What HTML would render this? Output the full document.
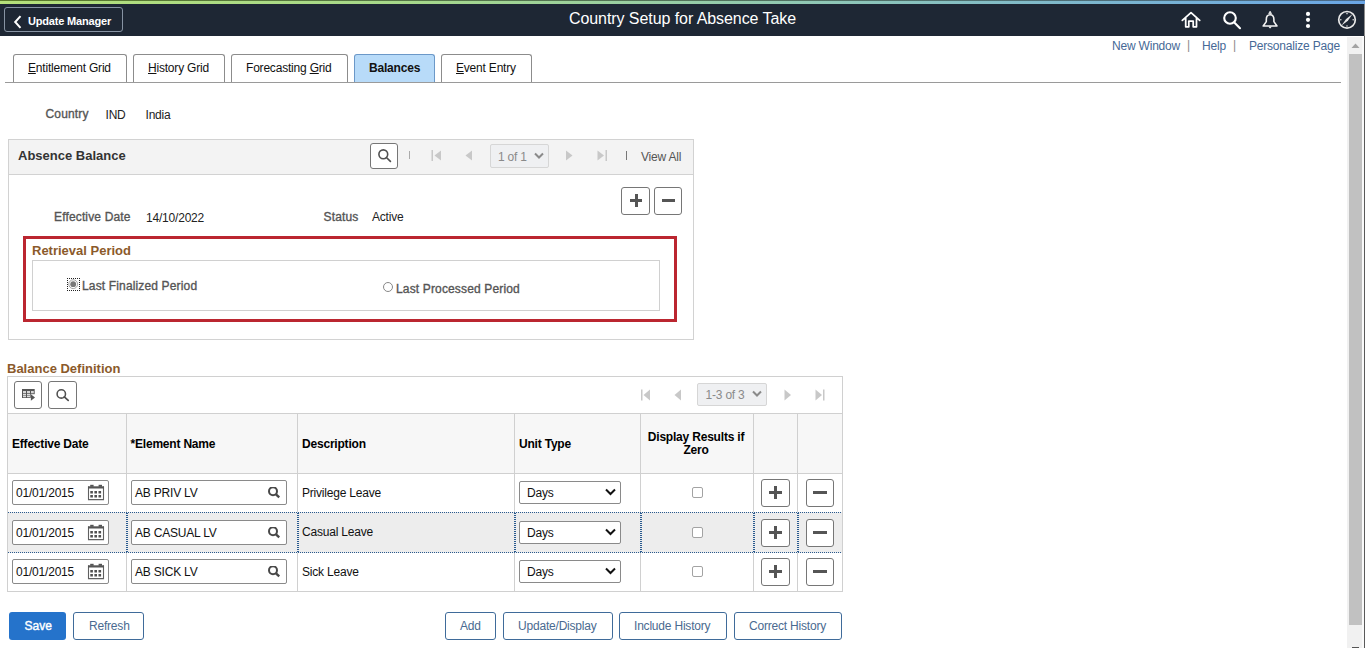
<!DOCTYPE html>
<html><head><meta charset="utf-8">
<style>
*{box-sizing:border-box;margin:0;padding:0}
html,body{width:1365px;height:648px;overflow:hidden;background:#fff;font-family:"Liberation Sans",sans-serif;color:#333}
.a{position:absolute}
.t{position:absolute;white-space:nowrap;font-size:12px;line-height:14px;letter-spacing:-0.2px}
.b{font-weight:bold}
.sb{font-weight:normal;letter-spacing:0.15px;-webkit-text-stroke:0.35px currentColor}
#strip{position:absolute;left:0;top:0;width:1365px;height:4px;background:linear-gradient(90deg,#b5e07a 0%,#a6d88a 30%,#8fc7b5 60%,#6aa6e6 100%)}
#strip:before{content:"";position:absolute;left:0;top:0;width:100%;height:1px;background:linear-gradient(90deg,#5b7a2a,#4a6a8a)}
#hdr{position:absolute;left:0;top:4px;width:1365px;height:32px;background:#1e2734}
#back{position:absolute;left:4px;top:7px;width:119px;height:25px;border:1px solid #8793a3;border-radius:3px}
.tab{position:absolute;top:54px;height:29px;border:1px solid #8c8c8c;border-bottom:none;border-radius:3px 3px 0 0;background:#fff}
.tab.sel{background:#b8dbf9;border-color:#6b98c8}
.lnk{color:#466996}
.sep{color:#8a8a8a}
.box{position:absolute;border:1px solid #d2d2d2}
.ibtn{position:absolute;border:1px solid #767676;border-radius:3px;background:#fff}
.inp{position:absolute;border:1px solid #8a8a8a;border-radius:2px;background:#fff}
.bbtn{position:absolute;top:612px;height:28px;border:1px solid #3f6b9a;border-radius:3px;background:#fff}
.vl{position:absolute;width:1px;background:#d0d0d0}
.hl{position:absolute;height:1px;background:#d0d0d0}
</style></head><body>
<div id="strip"></div>
<div id="hdr"></div>
<div id="back"></div>
<svg class="a" style="left:13px;top:15px" width="9" height="14" viewBox="0 0 9 14"><path d="M7.5 1.2 L2.2 7 L7.5 12.8" stroke="#fff" stroke-width="2" fill="none"/></svg>
<div class="t b" style="left:28px;top:15px;font-size:11px;color:#fff;line-height:13px;letter-spacing:-0.18px">Update Manager</div>
<div class="t" style="left:0;width:1365px;text-align:center;top:9.5px;font-size:16px;line-height:18px;letter-spacing:-0.07px;color:#fff">Country Setup for Absence Take</div>

<!-- header icons -->
<svg class="a" style="left:1180px;top:10px" width="22" height="20" viewBox="0 0 22 20"><path d="M2.3 10.4 L11 2.6 L19.7 10.4 M5.7 8.2 V16.8 H8.8 V11.1 H13.2 V16.8 H16.5 V8.2" stroke="#fff" stroke-width="1.75" fill="none" stroke-linejoin="round" stroke-linecap="round"/></svg>
<svg class="a" style="left:1220px;top:8px" width="24" height="24" viewBox="0 0 24 24"><circle cx="10" cy="10" r="5.8" stroke="#fff" stroke-width="2.1" fill="none"/><path d="M14.3 14.5 L20 20.2" stroke="#fff" stroke-width="2.1" stroke-linecap="round"/></svg>
<svg class="a" style="left:1260px;top:9px" width="20" height="22" viewBox="0 0 20 22"><path d="M10.1 5.7 C7.4 5.7 6.3 7.7 6.3 10.6 L6.3 12.6 L3.2 17 L17 17 L13.9 12.6 L13.9 10.6 C13.9 7.7 12.8 5.7 10.1 5.7 Z" stroke="#f2f2f2" stroke-width="1.6" fill="none" stroke-linejoin="round"/><path d="M8.7 4.6 L10.1 2.2 L11.5 4.6 Z" fill="#f2f2f2" stroke="#f2f2f2" stroke-width="0.8" stroke-linejoin="round"/><path d="M8.4 17.6 Q10.1 21.2 11.8 17.6 Z" fill="#f2f2f2"/></svg>
<svg class="a" style="left:1300px;top:8px" width="16" height="24" viewBox="0 0 16 24"><circle cx="8" cy="5.9" r="2.1" fill="#fff"/><circle cx="8" cy="11.8" r="2.1" fill="#fff"/><circle cx="8" cy="18" r="2.1" fill="#fff"/></svg>
<svg class="a" style="left:1336px;top:9px" width="22" height="22" viewBox="0 0 22 22"><circle cx="11" cy="10.8" r="8.3" stroke="#e8e8e8" stroke-width="1.7" fill="none"/><path d="M5.5 16.5 L11.9 11.7 L16.5 5 L10.1 9.9 Z" fill="#e8e8e8"/><circle cx="11" cy="4.6" r="0.8" fill="#ddd"/><circle cx="11" cy="17" r="0.8" fill="#ddd"/><circle cx="4.8" cy="10.8" r="0.8" fill="#ddd"/><circle cx="17.2" cy="10.8" r="0.8" fill="#ddd"/></svg>
<div class="a" style="left:1364px;top:4px;width:1px;height:32px;background:#8c8c8c"></div>

<!-- links -->
<div class="t lnk" style="left:1112px;top:39px">New Window</div>
<div class="t sep" style="left:1187px;top:38px">|</div>
<div class="t lnk" style="left:1202px;top:39px">Help</div>
<div class="t sep" style="left:1233px;top:38px">|</div>
<div class="t lnk" style="left:1249px;top:39px">Personalize Page</div>

<!-- tabs -->
<div class="tab" style="left:13px;width:114px"></div>
<div class="tab" style="left:133px;width:92px"></div>
<div class="tab" style="left:231px;width:117px"></div>
<div class="tab sel" style="left:354px;width:81px"></div>
<div class="tab" style="left:441px;width:91px"></div>
<div class="a" style="left:5px;top:82px;width:1336px;height:1px;background:#9a9a9a"></div>
<div class="t" style="left:28px;top:61px;color:#111"><u>E</u>ntitlement Grid</div>
<div class="t" style="left:148px;top:61px;color:#111"><u>H</u>istory Grid</div>
<div class="t" style="left:246px;top:61px;color:#111">Forecasting <u>G</u>rid</div>
<div class="t b" style="left:369px;top:61px;color:#111">Balances</div>
<div class="t" style="left:456px;top:61px;color:#111"><u>E</u>vent Entry</div>

<!-- country -->
<div class="t sb" style="left:45.5px;top:107px;color:#555">Country</div>
<div class="t" style="left:105.5px;top:108px;color:#222">IND</div>
<div class="t" style="left:145.5px;top:108px;color:#222">India</div>

<!-- absence balance box -->
<div class="box" style="left:8px;top:139px;width:686px;height:201px"></div>
<div class="a" style="left:9px;top:140px;width:684px;height:35px;background:#f3f3f3;border-bottom:1px solid #d2d2d2"></div>
<div class="t b" style="left:18px;top:148px;font-size:13px;line-height:16px;letter-spacing:0;color:#333">Absence Balance</div>
<div class="ibtn" style="left:370px;top:143px;width:28px;height:26px"></div>
<svg class="a" style="left:376px;top:148px" width="16" height="16" viewBox="0 0 16 16"><circle cx="7.3" cy="6.3" r="4.4" stroke="#505050" stroke-width="1.6" fill="none"/><path d="M10.4 9.5 L14.4 13.3" stroke="#505050" stroke-width="1.7" stroke-linecap="round"/></svg>
<div class="a" style="left:409px;top:151px;width:1px;height:8px;background:#aaa"></div>
<svg class="a" style="left:431px;top:150px" width="11" height="11" viewBox="0 0 11 11"><rect x="0.5" y="0" width="1.5" height="11" fill="#c8c8c8"/><path d="M10 0.5 V10.5 L3.5 5.5 Z" fill="#c8c8c8"/></svg>
<svg class="a" style="left:465px;top:150px" width="8" height="11" viewBox="0 0 8 11"><path d="M7 0.5 V10.5 L0.5 5.5 Z" fill="#c8c8c8"/></svg>
<div class="a" style="left:490px;top:144px;width:59px;height:24px;background:#eff0f2;border:1px solid #d6d6d6;border-radius:2px"></div>
<div class="t" style="left:498px;top:150px;color:#8a8a8a">1 of 1</div>
<svg class="a" style="left:534px;top:152px" width="10" height="8" viewBox="0 0 10 8"><path d="M1 1.5 L5 5.5 L9 1.5" stroke="#8a8a8a" stroke-width="2" fill="none"/></svg>
<svg class="a" style="left:565px;top:150px" width="8" height="11" viewBox="0 0 8 11"><path d="M1 0.5 V10.5 L7.5 5.5 Z" fill="#c8c8c8"/></svg>
<svg class="a" style="left:597px;top:150px" width="11" height="11" viewBox="0 0 11 11"><path d="M0.5 0.5 V10.5 L7 5.5 Z" fill="#c8c8c8"/><rect x="8.5" y="0" width="1.5" height="11" fill="#c8c8c8"/></svg>
<div class="a" style="left:626px;top:151px;width:1px;height:9px;background:#777"></div>
<div class="t" style="left:641px;top:150px;color:#555">View All</div>

<div class="ibtn" style="left:621px;top:187px;width:29px;height:28px"></div>
<div class="a" style="left:630px;top:199px;width:12px;height:3px;background:#555"></div>
<div class="a" style="left:634.5px;top:194px;width:3px;height:13px;background:#555"></div>
<div class="ibtn" style="left:654px;top:187px;width:28px;height:28px"></div>
<div class="a" style="left:662px;top:199px;width:13px;height:3px;background:#555"></div>

<div class="t sb" style="left:54px;top:210px;color:#555">Effective Date</div>
<div class="t" style="left:146px;top:210.5px;color:#222">14/10/2022</div>
<div class="t sb" style="left:323.5px;top:210px;color:#555">Status</div>
<div class="t" style="left:372px;top:210px;color:#222">Active</div>

<div class="a" style="left:23px;top:236px;width:654px;height:86px;border:3px solid #bb2630"></div>
<div class="t b" style="left:32px;top:242.5px;font-size:13px;line-height:16px;letter-spacing:0;color:#8b5a2b">Retrieval Period</div>
<div class="a" style="left:32px;top:260px;width:628px;height:51px;border:1px solid #d0d0d0"></div>
<div class="a" style="left:67px;top:278px;width:13px;height:13px;border:1px dotted #222"></div>
<svg class="a" style="left:67px;top:278px" width="13" height="13" viewBox="0 0 13 13"><circle cx="6.2" cy="6.2" r="4.4" fill="#fff" stroke="#a5a5a5" stroke-width="1"/><circle cx="6.2" cy="6.2" r="2.9" fill="#7a7a7a"/></svg>
<div class="t sb" style="left:82px;top:279px;color:#555">Last Finalized Period</div>
<div class="a" style="left:383px;top:282px;width:10px;height:10px;border-radius:50%;border:1px solid #888;background:#fff"></div>
<div class="t sb" style="left:396px;top:282px;color:#555">Last Processed Period</div>

<!-- balance definition -->
<div class="t b" style="left:7px;top:360.5px;font-size:13px;line-height:16px;letter-spacing:0;color:#8b5a2b">Balance Definition</div>
<div class="box" style="left:7px;top:376px;width:836px;height:216px;border-color:#d0d0d0"></div>
<div class="ibtn" style="left:14px;top:381px;width:28px;height:28px"></div>
<svg class="a" style="left:22px;top:389px" width="14" height="13" viewBox="0 0 14 13"><rect x="0" y="0" width="12.7" height="9" fill="#555"/><rect x="1" y="2" width="3" height="2.3" fill="#d6d6d6"/><rect x="5" y="2" width="3" height="2.3" fill="#d6d6d6"/><rect x="9" y="2" width="2.8" height="2.3" fill="#d6d6d6"/><rect x="1" y="5.2" width="3" height="1.2" fill="#fff"/><rect x="5" y="5.2" width="3" height="1.2" fill="#fff"/><rect x="1" y="7.2" width="3" height="1" fill="#fff"/><rect x="5" y="7.2" width="3" height="1" fill="#fff"/><rect x="8.7" y="5.2" width="4.5" height="7" fill="#fff"/><path d="M8.9 5.3 L13 8.6 L8.9 11.8 Z" fill="#555"/></svg>
<div class="ibtn" style="left:48px;top:381px;width:29px;height:28px"></div>
<svg class="a" style="left:54px;top:387px" width="16" height="16" viewBox="0 0 16 16"><circle cx="7.3" cy="6.9" r="4.2" stroke="#505050" stroke-width="1.55" fill="none"/><path d="M10.3 9.9 L14.2 13.4" stroke="#505050" stroke-width="1.7" stroke-linecap="round"/></svg>
<svg class="a" style="left:641px;top:389px" width="10" height="12" viewBox="0 0 10 12"><rect x="0" y="0.5" width="1.5" height="11" fill="#c8c8c8"/><path d="M9 0.5 V11.5 L2.5 6 Z" fill="#c8c8c8"/></svg>
<svg class="a" style="left:674px;top:389px" width="8" height="12" viewBox="0 0 8 12"><path d="M7 0.5 V11.5 L0.5 6 Z" fill="#c8c8c8"/></svg>
<div class="a" style="left:697px;top:383px;width:70px;height:23px;background:#eff0f2;border:1px solid #d6d6d6;border-radius:2px"></div>
<div class="t" style="left:705.5px;top:388px;color:#8a8a8a">1-3 of 3</div>
<svg class="a" style="left:752px;top:390px" width="10" height="8" viewBox="0 0 10 8"><path d="M1 1.5 L5 5.5 L9 1.5" stroke="#8a8a8a" stroke-width="2" fill="none"/></svg>
<svg class="a" style="left:784px;top:389px" width="8" height="12" viewBox="0 0 8 12"><path d="M0.5 0.5 V11.5 L7 6 Z" fill="#c8c8c8"/></svg>
<svg class="a" style="left:815px;top:389px" width="10" height="12" viewBox="0 0 10 12"><path d="M0.5 0.5 V11.5 L7 6 Z" fill="#c8c8c8"/><rect x="8" y="0.5" width="1.5" height="11" fill="#c8c8c8"/></svg>

<!-- grid header -->
<div class="a" style="left:8px;top:413px;width:834px;height:61px;background:#f7f7f7;border-top:1px solid #d0d0d0;border-bottom:1px solid #d0d0d0"></div>
<div class="vl" style="left:126px;top:413px;height:178px"></div>
<div class="vl" style="left:297px;top:413px;height:178px"></div>
<div class="vl" style="left:514px;top:413px;height:178px"></div>
<div class="vl" style="left:640px;top:413px;height:178px"></div>
<div class="vl" style="left:753px;top:413px;height:178px"></div>
<div class="vl" style="left:797px;top:413px;height:178px"></div>
<div class="t b" style="left:12px;top:437px;color:#000">Effective Date</div>
<div class="t b" style="left:130.5px;top:437px;color:#000">*Element Name</div>
<div class="t b" style="left:302px;top:437px;color:#000">Description</div>
<div class="t b" style="left:519px;top:437px;color:#000">Unit Type</div>
<div class="t b" style="left:640px;width:112px;text-align:center;top:431px;line-height:13px;color:#000">Display Results if<br>Zero</div>

<!-- row 2 bg -->
<div class="a" style="left:8px;top:512px;width:834px;height:41px;background:#ededed"></div>
<div class="a" style="left:8px;top:512px;width:834px;height:1px;background:repeating-linear-gradient(90deg,#2a5a8e 0 1px,transparent 1px 2px)"></div>
<div class="a" style="left:8px;top:552px;width:834px;height:1px;background:repeating-linear-gradient(90deg,#2a5a8e 0 1px,transparent 1px 2px)"></div>
<div class="a" style="left:126px;top:513px;width:2px;height:39px;background:repeating-linear-gradient(180deg,#2a5a8e 0 1px,transparent 1px 2px)"></div>
<div class="a" style="left:297px;top:513px;width:2px;height:39px;background:repeating-linear-gradient(180deg,#2a5a8e 0 1px,transparent 1px 2px)"></div>
<div class="a" style="left:514px;top:513px;width:2px;height:39px;background:repeating-linear-gradient(180deg,#2a5a8e 0 1px,transparent 1px 2px)"></div>
<div class="a" style="left:640px;top:513px;width:2px;height:39px;background:repeating-linear-gradient(180deg,#2a5a8e 0 1px,transparent 1px 2px)"></div>
<div class="a" style="left:753px;top:513px;width:2px;height:39px;background:repeating-linear-gradient(180deg,#2a5a8e 0 1px,transparent 1px 2px)"></div>
<div class="a" style="left:797px;top:513px;width:2px;height:39px;background:repeating-linear-gradient(180deg,#2a5a8e 0 1px,transparent 1px 2px)"></div>
<div class="inp" style="left:12px;top:480px;width:97px;height:25px"></div>
<div class="t" style="left:16px;top:485.5px;color:#111">01/01/2015</div>
<svg class="a" style="left:87px;top:484px" width="18" height="17" viewBox="0 0 18 17"><path d="M1.5 2.5 V15.6 H16.5 V2.5" fill="none" stroke="#606060" stroke-width="1.1"/><rect x="1" y="2.3" width="16" height="2.2" fill="#555"/><rect x="3.2" y="0.8" width="3.4" height="2" fill="#555"/><rect x="11.6" y="0.8" width="3.4" height="2" fill="#555"/><path d="M3.3 7h2.6v2.5h-2.6z M7.4 7h2.6v2.5h-2.6z M11.5 7h2.6v2.5h-2.6z M3.3 11h2.6v2.5h-2.6z M7.4 11h2.6v2.5h-2.6z M11.5 11h2.6v2.5h-2.6z" fill="#505050"/></svg>
<div class="inp" style="left:131px;top:480px;width:156px;height:25px"></div>
<div class="t" style="left:135px;top:485.5px;color:#111">AB PRIV LV</div>
<svg class="a" style="left:267px;top:487px" width="14" height="13" viewBox="0 0 14 13"><circle cx="6" cy="4.3" r="4" stroke="#484848" stroke-width="2" fill="none"/><path d="M9 7.4 L12.2 10.4" stroke="#484848" stroke-width="2.4" stroke-linecap="butt"/></svg>
<div class="t" style="left:302px;top:485.5px;color:#111">Privilege Leave</div>
<div class="inp" style="left:519px;top:481px;width:102px;height:23px"></div>
<div class="t" style="left:527px;top:485.5px;color:#111">Days</div>
<svg class="a" style="left:605px;top:488px" width="11" height="8" viewBox="0 0 11 8"><path d="M1 1.5 L5.5 6 L10 1.5" stroke="#111" stroke-width="2" fill="none"/></svg>
<div class="a" style="left:692px;top:487px;width:11px;height:11px;border:1px solid #a3a3a3;border-radius:2px;background:#fff"></div>
<div class="ibtn" style="left:761px;top:479px;width:29px;height:28px"></div>
<div class="a" style="left:769px;top:491px;width:13px;height:3px;background:#555"></div>
<div class="a" style="left:774px;top:486px;width:3px;height:13px;background:#555"></div>
<div class="ibtn" style="left:806px;top:479px;width:28px;height:28px"></div>
<div class="a" style="left:813px;top:491px;width:14px;height:3px;background:#555"></div>
<div class="inp" style="left:12px;top:520px;width:97px;height:25px"></div>
<div class="t" style="left:16px;top:525.5px;color:#111">01/01/2015</div>
<svg class="a" style="left:87px;top:524px" width="18" height="17" viewBox="0 0 18 17"><path d="M1.5 2.5 V15.6 H16.5 V2.5" fill="none" stroke="#606060" stroke-width="1.1"/><rect x="1" y="2.3" width="16" height="2.2" fill="#555"/><rect x="3.2" y="0.8" width="3.4" height="2" fill="#555"/><rect x="11.6" y="0.8" width="3.4" height="2" fill="#555"/><path d="M3.3 7h2.6v2.5h-2.6z M7.4 7h2.6v2.5h-2.6z M11.5 7h2.6v2.5h-2.6z M3.3 11h2.6v2.5h-2.6z M7.4 11h2.6v2.5h-2.6z M11.5 11h2.6v2.5h-2.6z" fill="#505050"/></svg>
<div class="inp" style="left:131px;top:520px;width:156px;height:25px"></div>
<div class="t" style="left:135px;top:525.5px;color:#111">AB CASUAL LV</div>
<svg class="a" style="left:267px;top:527px" width="14" height="13" viewBox="0 0 14 13"><circle cx="6" cy="4.3" r="4" stroke="#484848" stroke-width="2" fill="none"/><path d="M9 7.4 L12.2 10.4" stroke="#484848" stroke-width="2.4" stroke-linecap="butt"/></svg>
<div class="t" style="left:302px;top:524.5px;color:#111">Casual Leave</div>
<div class="inp" style="left:519px;top:521px;width:102px;height:23px"></div>
<div class="t" style="left:527px;top:525.5px;color:#111">Days</div>
<svg class="a" style="left:605px;top:528px" width="11" height="8" viewBox="0 0 11 8"><path d="M1 1.5 L5.5 6 L10 1.5" stroke="#111" stroke-width="2" fill="none"/></svg>
<div class="a" style="left:692px;top:527px;width:11px;height:11px;border:1px solid #a3a3a3;border-radius:2px;background:#fff"></div>
<div class="ibtn" style="left:761px;top:519px;width:29px;height:28px"></div>
<div class="a" style="left:769px;top:531px;width:13px;height:3px;background:#555"></div>
<div class="a" style="left:774px;top:526px;width:3px;height:13px;background:#555"></div>
<div class="ibtn" style="left:806px;top:519px;width:28px;height:28px"></div>
<div class="a" style="left:813px;top:531px;width:14px;height:3px;background:#555"></div>
<div class="inp" style="left:12px;top:559px;width:97px;height:25px"></div>
<div class="t" style="left:16px;top:564.5px;color:#111">01/01/2015</div>
<svg class="a" style="left:87px;top:563px" width="18" height="17" viewBox="0 0 18 17"><path d="M1.5 2.5 V15.6 H16.5 V2.5" fill="none" stroke="#606060" stroke-width="1.1"/><rect x="1" y="2.3" width="16" height="2.2" fill="#555"/><rect x="3.2" y="0.8" width="3.4" height="2" fill="#555"/><rect x="11.6" y="0.8" width="3.4" height="2" fill="#555"/><path d="M3.3 7h2.6v2.5h-2.6z M7.4 7h2.6v2.5h-2.6z M11.5 7h2.6v2.5h-2.6z M3.3 11h2.6v2.5h-2.6z M7.4 11h2.6v2.5h-2.6z M11.5 11h2.6v2.5h-2.6z" fill="#505050"/></svg>
<div class="inp" style="left:131px;top:559px;width:156px;height:25px"></div>
<div class="t" style="left:135px;top:564.5px;color:#111">AB SICK LV</div>
<svg class="a" style="left:267px;top:566px" width="14" height="13" viewBox="0 0 14 13"><circle cx="6" cy="4.3" r="4" stroke="#484848" stroke-width="2" fill="none"/><path d="M9 7.4 L12.2 10.4" stroke="#484848" stroke-width="2.4" stroke-linecap="butt"/></svg>
<div class="t" style="left:302px;top:564.5px;color:#111">Sick Leave</div>
<div class="inp" style="left:519px;top:560px;width:102px;height:23px"></div>
<div class="t" style="left:527px;top:564.5px;color:#111">Days</div>
<svg class="a" style="left:605px;top:567px" width="11" height="8" viewBox="0 0 11 8"><path d="M1 1.5 L5.5 6 L10 1.5" stroke="#111" stroke-width="2" fill="none"/></svg>
<div class="a" style="left:692px;top:566px;width:11px;height:11px;border:1px solid #a3a3a3;border-radius:2px;background:#fff"></div>
<div class="ibtn" style="left:761px;top:558px;width:29px;height:28px"></div>
<div class="a" style="left:769px;top:570px;width:13px;height:3px;background:#555"></div>
<div class="a" style="left:774px;top:565px;width:3px;height:13px;background:#555"></div>
<div class="ibtn" style="left:806px;top:558px;width:28px;height:28px"></div>
<div class="a" style="left:813px;top:570px;width:14px;height:3px;background:#555"></div>
<div class="a" style="left:9px;top:612px;width:57px;height:28px;background:#2573cb;border-radius:3px"></div>
<div class="t sb" style="left:24.5px;top:619px;color:#fff;letter-spacing:0;-webkit-text-stroke:0.4px #fff">Save</div>
<div class="bbtn" style="left:73px;width:71px"></div>
<div class="t" style="left:89px;top:619px;color:#4a6a90">Refresh</div>
<div class="bbtn" style="left:445px;width:51px"></div>
<div class="t" style="left:460px;top:619px;color:#4a6a90">Add</div>
<div class="bbtn" style="left:503px;width:110px"></div>
<div class="t" style="left:518px;top:619px;color:#4a6a90">Update/Display</div>
<div class="bbtn" style="left:619px;width:108px"></div>
<div class="t" style="left:634px;top:619px;color:#4a6a90">Include History</div>
<div class="bbtn" style="left:734px;width:108px"></div>
<div class="t" style="left:749px;top:619px;color:#4a6a90">Correct History</div>

<!-- scrollbar -->
<div class="a" style="left:1347px;top:37px;width:17px;height:611px;background:#f1f1f1"></div><div class="a" style="left:1362px;top:37px;width:2px;height:611px;background:#fafafa"></div><div class="a" style="left:1364px;top:36px;width:1px;height:612px;background:#5a5a5a"></div>
<svg class="a" style="left:1351px;top:43px" width="9" height="6" viewBox="0 0 9 6"><path d="M0.5 5 L4.5 0.6 L8.5 5 Z" fill="#a3a3a3"/></svg>
<div class="a" style="left:1349px;top:54px;width:13px;height:571px;background:#c1c1c1"></div>
<div class="a" style="left:1352px;top:647px;width:7px;height:1px;background:#555"></div>
</body></html>
